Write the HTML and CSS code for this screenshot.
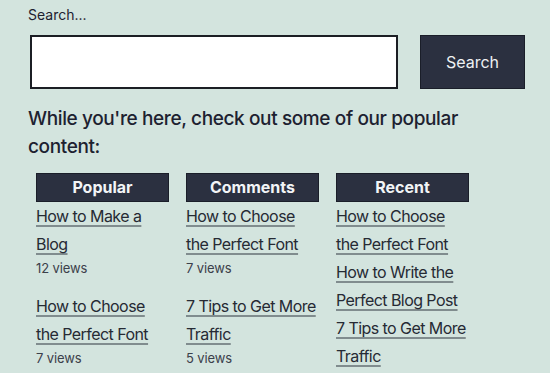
FILE: index.html
```html
<!DOCTYPE html>
<html>
<head>
    <meta charset="UTF-8">
    <title>Not Found</title>
    <link rel="stylesheet" href="styles.css">
</head>
<body>
<div class="page">
    <form class="search-form">
        <label for="searchInput" class="search-label">Search...</label>
        <div class="search-row">
            <input type="text" id="searchInput" class="search-input">
            <button type="button" class="search-button">Search</button>
        </div>
    </form>

    <h2 class="popular-title">While you're here, check out some of our popular content:</h2>

    <div class="tabs">
        <div class="tab-column">
            <div class="tab-head">Popular</div>
            <ul class="post-list">
                <li>
                    <a href="#">How to Make a Blog</a>
                    <span class="post-meta">12 views</span>
                </li>
                <li>
                    <a href="#">How to Choose the Perfect Font</a>
                    <span class="post-meta">7 views</span>
                </li>
            </ul>
        </div>
        <div class="tab-column">
            <div class="tab-head">Comments</div>
            <ul class="post-list">
                <li>
                    <a href="#">How to Choose the Perfect Font</a>
                    <span class="post-meta">7 views</span>
                </li>
                <li>
                    <a href="#">7 Tips to Get More Traffic</a>
                    <span class="post-meta">5 views</span>
                </li>
            </ul>
        </div>
        <div class="tab-column">
            <div class="tab-head">Recent</div>
            <ul class="post-list recent">
                <li><a href="#">How to Choose the Perfect Font</a></li>
                <li><a href="#">How to Write the Perfect Blog Post</a></li>
                <li><a href="#">7 Tips to Get More Traffic</a></li>
            </ul>
        </div>
    </div>
</div>
</body>
</html>
```

FILE: styles.css
```css
html, body {
    margin: 0;
    padding: 0;
}

body {
    font-family: Inter, "Noto Sans", sans-serif;
    background-color: #d3e4de;
    color: #1d2130;
    height: 373px;
    overflow: hidden;
}

.page {
    padding: 5px 25px 0 28px;
}

.search-label {
    display: block;
    font-size: 14px;
    line-height: 20px;
    margin-bottom: 10px;
}

.search-row {
    display: flex;
    gap: 22px;
    margin-left: 2px;
}

.search-input {
    flex: 1;
    height: 54px;
    box-sizing: border-box;
    border: 2px solid #1b1e24;
    background-color: #fff;
    margin: 0;
    padding: 0 10px;
    font-size: 16px;
}

.search-button {
    width: 105px;
    height: 54px;
    margin: 0;
    border: 1px solid #1a1e29;
    background-color: #2b3040;
    color: #eef1f3;
    font-family: inherit;
    font-size: 16px;
    cursor: pointer;
}

.popular-title {
    font-size: 19px;
    font-weight: 500;
    letter-spacing: -0.02em;
    line-height: 28px;
    margin: 16px 0 12px;
}

.tabs {
    display: flex;
    gap: 17px;
    padding-left: 8px;
}

.tab-column {
    width: 133px;
}

.tab-head {
    height: 29px;
    box-sizing: border-box;
    border: 1px solid #1a1e29;
    background-color: #2b3040;
    color: #f2f4f6;
    font-weight: 700;
    font-size: 16px;
    line-height: 27px;
    text-align: center;
}

.post-list {
    list-style: none;
    margin: 0;
    padding: 0;
}

.post-list li {
    margin-bottom: 14px;
}

.post-list.recent li {
    margin-bottom: 0;
}

.post-list a {
    font-size: 16px;
    letter-spacing: -0.035em;
    line-height: 28px;
    color: #262a34;
    text-decoration: underline;
    text-decoration-color: #808c8e;
    text-decoration-thickness: 1.5px;
    text-underline-offset: 3px;
}

.post-meta {
    display: block;
    font-size: 13px;
    letter-spacing: -0.01em;
    line-height: 20px;
    color: #3b404a;
}
```
